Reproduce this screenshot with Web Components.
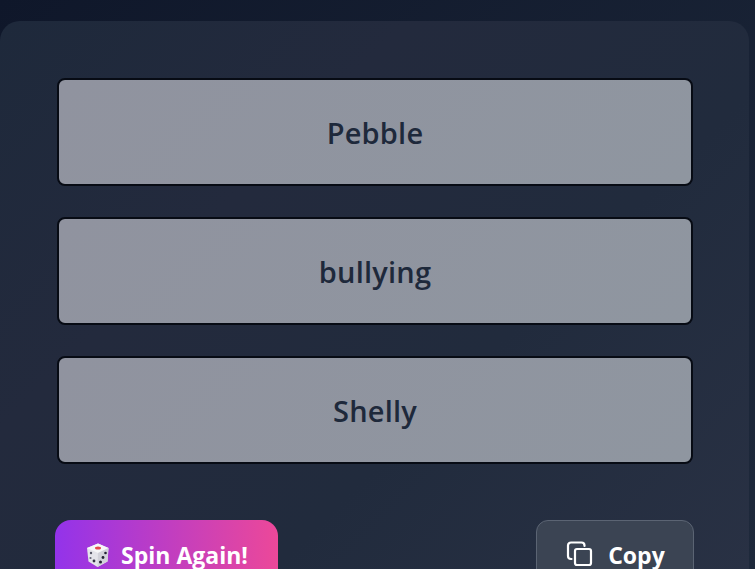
<!DOCTYPE html>
<html>
<head>
<meta charset="utf-8">
<style>
    html, body { margin: 0; height: 569px; overflow: hidden; }
    body {
        background: linear-gradient(135deg, #0f172a, #1e293b);
        font-family: "Open Sans", "Noto Sans", sans-serif;
    }
</style>
</head>
<body>
<spin-card>
    <word-slot>Pebble</word-slot>
    <word-slot>bullying</word-slot>
    <word-slot>Shelly</word-slot>
    <spin-button slot="actions">Spin Again!</spin-button>
    <copy-button slot="actions">Copy</copy-button>
</spin-card>

<script>
class SpinCard extends HTMLElement {
    constructor() {
        super();
        this.attachShadow({ mode: 'open' });
        this.shadowRoot.innerHTML = `
            <style>
                :host {
                    display: block;
                    box-sizing: border-box;
                    width: 749px;
                    margin-top: 21px;
                    height: 620px;
                    padding: 57px 55px 0 55px;
                    border-radius: 20px;
                    background: linear-gradient(135deg, #1e293b, #232a3d 30%, #212b3d 60%, #2a3245);
                }
                .words { display: flex; flex-direction: column; gap: 31px; padding: 0 1px 0 2px; }
                .actions {
                    display: flex;
                    justify-content: space-between;
                    align-items: flex-start;
                    margin-top: 56px;
                }
            </style>
            <div class="words"><slot></slot></div>
            <div class="actions"><slot name="actions"></slot></div>
        `;
    }
}

class WordSlot extends HTMLElement {
    constructor() {
        super();
        this.attachShadow({ mode: 'open' });
        this.shadowRoot.innerHTML = `
            <style>
                :host {
                    display: flex;
                    align-items: center;
                    justify-content: center;
                    box-sizing: border-box;
                    height: 108px;
                    border: 2px solid #070b14;
                    border-radius: 8px;
                    background: linear-gradient(135deg, #90939f, #8f96a0);
                    color: #1e293b;
                    font-size: 29px;
                    font-weight: 600;
                    letter-spacing: 0.2px;
                }
            </style>
            <slot></slot>
        `;
    }
}

class SpinButton extends HTMLElement {
    constructor() {
        super();
        this.attachShadow({ mode: 'open' });
        this.shadowRoot.innerHTML = `
            <style>
                :host {
                    display: flex;
                    align-items: center;
                    justify-content: center;
                    gap: 10px;
                    box-sizing: border-box;
                    width: 223px;
                    height: 72px;
                    border-radius: 16px;
                    background: linear-gradient(90deg, #9333ea, #ec4899);
                    color: #fff;
                    font-size: 23px;
                    font-weight: 700;
                }
                svg { width: 26px; height: 26px; flex: none; margin-top: -2px; }
                span { margin-top: -3px; }
            </style>
            <svg viewBox="0 0 26 26">
                <path d="M13 1.5 23.5 6 22.5 19.5 12.5 25 3.500 19.5 2 6Z" fill="#e4e4ea"/>
                <path d="M13 1.5 23.5 6 13 11 2 6Z" fill="#f6f6f8"/>
                <path d="M13 11 23.5 6 22.5 19.5 12.5 25Z" fill="#d2d2da"/>
                <ellipse cx="13" cy="6" rx="3" ry="1.500" fill="#e5484d"/>
                <circle cx="6" cy="11" r="1.2" fill="#556"/>
                <circle cx="9" cy="19" r="1.4" fill="#334"/>
                <circle cx="5.5" cy="16" r="1.1" fill="#667"/>
                <circle cx="15.5" cy="20" r="1.5" fill="#223"/>
                <circle cx="18" cy="15.5" r="1.4" fill="#223"/>
                <circle cx="20.5" cy="11" r="1.3" fill="#223"/>
            </svg>
            <span><slot></slot></span>
        `;
    }
}

class CopyButton extends HTMLElement {
    constructor() {
        super();
        this.attachShadow({ mode: 'open' });
        this.shadowRoot.innerHTML = `
            <style>
                :host {
                    display: flex;
                    align-items: center;
                    justify-content: center;
                    gap: 13px;
                    box-sizing: border-box;
                    width: 158px;
                    height: 72px;
                    border: 1px solid #5b6473;
                    border-radius: 12px;
                    background: #3b4453;
                    color: #fff;
                    font-size: 23px;
                    font-weight: 700;
                }
                svg { width: 30px; height: 30px; flex: none; margin-top: -4px; }
                span { margin-top: -3px; }
            </style>
            <svg viewBox="0 0 30 30" fill="none" stroke="#fff" stroke-width="2.2" stroke-linecap="round" stroke-linejoin="round">
                <rect x="10" y="10" width="16" height="16" rx="2"/>
                <path d="M6.5 20H6a3 3 0 0 1-3-3V6.5A3 3 0 0 1 6 3.500h10.500a3 3 0 0 1 3 3V7"/>
            </svg>
            <span><slot></slot></span>
        `;
    }
}

customElements.define('spin-card', SpinCard);
customElements.define('word-slot', WordSlot);
customElements.define('spin-button', SpinButton);
customElements.define('copy-button', CopyButton);
</script>
</body>
</html>
